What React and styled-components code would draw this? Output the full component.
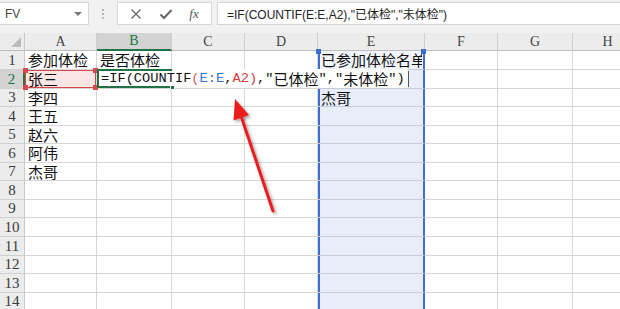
import React from 'react';
import styled, { createGlobalStyle } from 'styled-components';

const GlobalStyle = createGlobalStyle`
  html, body {
    margin: 0;
    padding: 0;
    background: #ffffff;
  }
  * {
    box-sizing: border-box;
  }
`;

const GREEN = '#217346';
const BLUE = '#3c6fd0';
const RED = '#d8474b';

const COLS = ['A', 'B', 'C', 'D', 'E', 'F', 'G', 'H'];
const HEIGHTS = [19, 19, 18, 19, 18, 19, 18, 19, 18, 19, 19, 18, 19, 18];

const DATA = {
  1: { A: '参加体检', B: '是否体检', E: '已参加体检名单' },
  2: { A: '张三' },
  3: { A: '李四', E: '杰哥' },
  4: { A: '王五' },
  5: { A: '赵六' },
  6: { A: '阿伟' },
  7: { A: '杰哥' },
};

const Page = styled.div`
  position: relative;
  width: 620px;
  height: 309px;
  overflow: hidden;
  background: #fff;
`;

const FormulaBar = styled.div`
  display: flex;
  align-items: flex-start;
  height: 33px;
  padding-top: 2px;
  background: #f1f1f1;
`;

const Box = styled.div`
  height: 23px;
  background: #fff;
  border: 1px solid #d6d6d6;
  display: flex;
  align-items: center;
`;

const NameBox = styled(Box)`
  width: 89px;
  border-left: none;
  justify-content: space-between;
  padding: 0 6px 0 5px;
  font: 12px "Liberation Sans", sans-serif;
  color: #444;
`;

const Caret = styled.span`
  width: 0;
  height: 0;
  border-left: 4px solid transparent;
  border-right: 4px solid transparent;
  border-top: 4px solid #777;
`;

const Grip = styled.div`
  width: 28px;
  height: 23px;
  display: flex;
  flex-direction: column;
  align-items: center;
  justify-content: center;
  gap: 2px;

  & span {
    width: 2px;
    height: 2px;
    background: #b5b5b5;
  }
`;

const ToolGroup = styled(Box)`
  width: 95px;
  justify-content: space-around;
  padding: 0 4px;
`;

const Fx = styled.span`
  font: italic 13px "Liberation Serif", serif;
  color: #555;
`;

const FormulaInput = styled(Box)`
  flex: 1;
  margin-left: 5px;
  border-right: none;
  padding-left: 9px;
  font: 12px "Liberation Sans", "Noto Sans CJK SC", sans-serif;
  color: #222;
  white-space: nowrap;
`;

const Sheet = styled.div`
  display: grid;
  grid-template-columns: 25px 72px 75px 73px 73px 107px 73px 75px 70px;
  grid-template-rows: 18px ${HEIGHTS.map(h => h + 'px').join(' ')};
`;

const Corner = styled.div`
  position: relative;
  background: #ececec;
  border-right: 1px solid #c9c9c9;
  border-bottom: 1px solid #bdbdbd;

  &::after {
    content: '';
    position: absolute;
    right: 3px;
    bottom: 3px;
    border-left: 10px solid transparent;
    border-bottom: 10px solid #bcbcbc;
  }
`;

const ColHeader = styled.div`
  display: flex;
  align-items: center;
  justify-content: center;
  font: 14px "Liberation Serif", serif;
  color: ${p => (p.$active ? GREEN : '#444')};
  background: ${p => (p.$active ? '#d3d3d3' : '#ececec')};
  border-right: 1px solid #cfcfcf;
  border-bottom: ${p => (p.$active ? `2px solid ${GREEN}` : '1px solid #bdbdbd')};
`;

const RowHeader = styled.div`
  display: flex;
  align-items: center;
  justify-content: center;
  font: 15px "Liberation Serif", serif;
  color: ${p => (p.$active ? GREEN : '#3a3a3a')};
  background: ${p => (p.$active ? '#d3d3d3' : '#ececec')};
  border-bottom: 1px solid #d0d0d0;
  border-right: ${p => (p.$active ? `2px solid ${GREEN}` : '1px solid #c9c9c9')};
`;

const Cell = styled.div`
  position: relative;
  padding-left: 3px;
  font: 15px "Noto Sans CJK SC", sans-serif;
  line-height: 18px;
  color: #111;
  white-space: nowrap;
  overflow: ${p => (p.$clip ? 'hidden' : 'visible')};
  border-right: 1px solid ${p => (p.$sel ? BLUE : '#d6d6d6')};
  border-bottom: 1px solid ${p => (p.$sel ? '#c5ccd8' : '#d6d6d6')};
  background: ${p => p.$bg || 'transparent'};
  box-shadow: ${p =>
    p.$sel ? `inset 2px 0 ${BLUE}, inset -1px 0 ${BLUE}` : p.$ref ? `inset 0 0 0 1px ${RED}` : 'none'};
`;

const Handle = styled.span`
  position: absolute;
  width: 5px;
  height: 5px;
  background: ${p => p.$color};
  ${p => (p.$top ? 'top: -2px;' : 'bottom: -2px;')}
  ${p => (p.$left ? 'left: -2px;' : 'right: -2px;')}
  z-index: 4;
`;

const Editor = styled.div`
  position: absolute;
  left: 0;
  top: -1px;
  width: 311px;
  height: 19px;
  z-index: 3;
  background: #fff;
  padding-left: 4px;
  display: flex;
  align-items: center;
  white-space: nowrap;
  font: 13.7px "Liberation Mono", monospace;
  color: #111;
`;

const Frame = styled.div`
  position: absolute;
  left: 0;
  top: -1px;
  width: 75px;
  height: 19px;
  z-index: 4;
  border-top: 2px solid ${GREEN};
  border-left: 2px solid ${GREEN};
  border-bottom: 2px solid ${GREEN};
  pointer-events: none;
`;

const FrameHandle = styled.span`
  position: absolute;
  right: -3px;
  bottom: -4px;
  width: 5px;
  height: 5px;
  background: ${GREEN};
  border: 1px solid #fff;
`;

const Part = styled.span`
  color: ${p => p.$color || '#111'};
`;

const Cjk = styled.span`
  font: 15px "Noto Sans CJK SC", sans-serif;
`;

const Cursor = styled.span`
  width: 1px;
  height: 16px;
  margin-left: 3px;
  background: #555;
`;

const ClipText = styled.div`
  overflow: hidden;
  width: 101px;
`;

const Overlay = styled.svg`
  position: absolute;
  left: 0;
  top: 0;
  pointer-events: none;
  z-index: 10;
`;

function CellEditor() {
  return (
    <>
      <Editor>
        <Part>=IF(COUNTIF</Part>
        <Part $color="#e0575a">(</Part>
        <Part $color="#3d72d6">E:E</Part>
        <Part>,</Part>
        <Part $color="#d9393d">A2)</Part>
        <Part>,"</Part>
        <Cjk>已体检</Cjk>
        <Part>","</Part>
        <Cjk>未体检</Cjk>
        <Part>")</Part>
        <Cursor />
      </Editor>
      <Frame>
        <FrameHandle />
      </Frame>
    </>
  );
}

function SheetCell({ row, col }) {
  const text = (DATA[row] || {})[col];
  if (col === 'B' && row === 2) {
    return (
      <Cell>
        <CellEditor />
      </Cell>
    );
  }
  if (col === 'A' && row === 2) {
    return (
      <Cell $bg="#fbe4e4" $ref>
        {text}
        <Handle $color={RED} $top $left />
        <Handle $color={RED} $top />
        <Handle $color={RED} $left />
        <Handle $color={RED} />
      </Cell>
    );
  }
  if (col === 'E') {
    return (
      <Cell $sel $clip={row !== 1} $bg={row === 1 ? '#f1f5fb' : '#e7eef9'}>
        {row === 1 ? <ClipText>{text}</ClipText> : text}
        {row === 1 && (
          <>
            <Handle $color={BLUE} $top $left />
            <Handle $color={BLUE} $top />
          </>
        )}
      </Cell>
    );
  }
  return <Cell>{text}</Cell>;
}

export default function App() {
  const rows = HEIGHTS.map((_, i) => i + 1);
  return (
    <Page>
      <GlobalStyle />
      <FormulaBar>
        <NameBox>
          FV
          <Caret />
        </NameBox>
        <Grip>
          <span />
          <span />
          <span />
        </Grip>
        <ToolGroup>
          <svg width="12" height="12" viewBox="0 0 12 12">
            <path d="M1.5 1.5 L10.5 10.5 M10.5 1.5 L1.5 10.5" stroke="#666" strokeWidth="1.3" fill="none" />
          </svg>
          <svg width="14" height="12" viewBox="0 0 14 12">
            <path d="M1.5 6.5 L5 10 L12.5 2" stroke="#666" strokeWidth="2" fill="none" />
          </svg>
          <Fx>fx</Fx>
        </ToolGroup>
        <FormulaInput>=IF(COUNTIF(E:E,A2),"已体检","未体检")</FormulaInput>
      </FormulaBar>

      <Sheet>
        <Corner />
        {COLS.map(c => (
          <ColHeader key={c} $active={c === 'B'}>
            {c}
          </ColHeader>
        ))}
        {rows.map(r => (
          <React.Fragment key={r}>
            <RowHeader $active={r === 2}>{r}</RowHeader>
            {COLS.map(c => (
              <SheetCell key={c} row={r} col={c} />
            ))}
          </React.Fragment>
        ))}
      </Sheet>

      <Overlay width="620" height="309">
        <defs>
          <filter id="shadow" x="-50%" y="-50%" width="200%" height="200%">
            <feDropShadow dx="2" dy="2" stdDeviation="1.5" floodColor="#000" floodOpacity="0.35" />
          </filter>
        </defs>
        <g filter="url(#shadow)">
          <path d="M273 211 L240 113" stroke="#ea1a1f" strokeWidth="3" strokeLinecap="round" fill="none" />
          <polygon points="235,99 249,115 233.5,120.5" fill="#ea1a1f" />
        </g>
      </Overlay>
    </Page>
  );
}
